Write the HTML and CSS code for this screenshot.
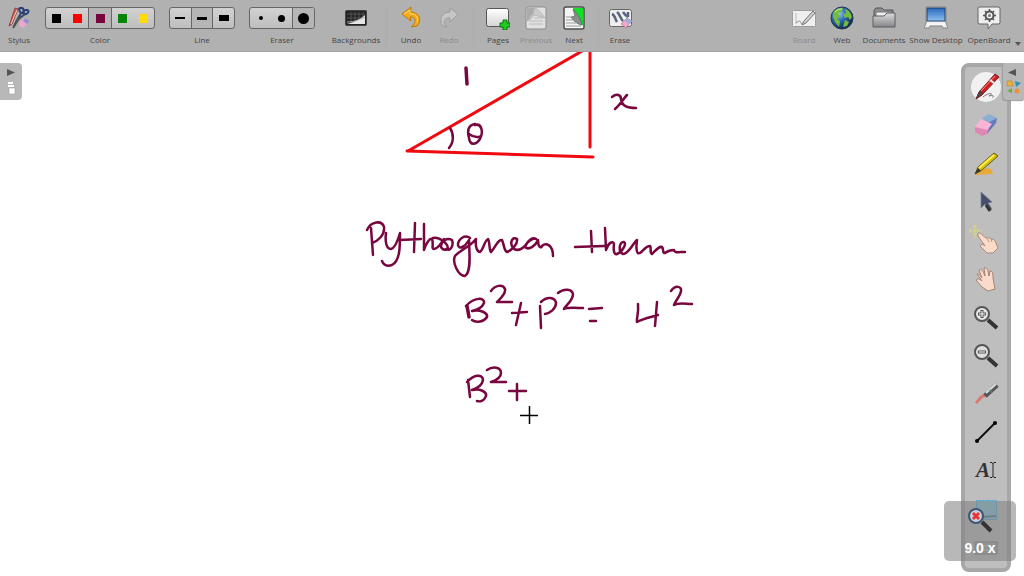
FILE: index.html
```html
<!DOCTYPE html>
<html lang="en">
<head>
<meta charset="utf-8">
<meta name="viewport" content="width=device-width, initial-scale=1">
<title>OpenBoard</title>
<link rel="stylesheet" href="styles.css">
</head>
<body>
<svg class="defs" aria-hidden="true">
  <defs>
    <linearGradient id="steel" x1="0" y1="0" x2="0" y2="1"><stop offset="0" stop-color="#ddd"/><stop offset="1" stop-color="#85858a"/></linearGradient>
    <linearGradient id="paper" x1="0" y1="0" x2="0" y2="1"><stop offset="0" stop-color="#fff"/><stop offset="1" stop-color="#d5d5d5"/></linearGradient>
    <linearGradient id="sky" x1="0" y1="0" x2="0" y2="1"><stop offset="0" stop-color="#2868bd"/><stop offset="1" stop-color="#8fc0ef"/></linearGradient>
    <radialGradient id="sea" cx=".35" cy=".3" r=".75"><stop offset="0" stop-color="#9bc8f4"/><stop offset=".45" stop-color="#2d68b4"/><stop offset="1" stop-color="#12224e"/></radialGradient>
  </defs>
</svg>
<header class="toolbar">
  <button class="tool" type="button">
    <svg class="icon" viewBox="0 0 24 24"><path d="M13 2c-2 1 0 5 2 5s2-5 0-5zM20 4c2 0 2 3-1 4s-3-4 0-4z" fill="none" stroke="#263e78" stroke-width="2"/><path d="M14 7L7 20M18 8L9 15" stroke="#384868" stroke-width="2"/><path d="M8 2l3 1-6 15-3 2z" fill="#d85745" stroke="#8b4945"/><path d="M10 4L4 18" stroke="#f7c7bb"/><path d="M13 11L6 22" stroke="#555" stroke-width="2"/><path d="M13 15l5-3 5 3-7 7-4-2z" fill="#eda7d0"/><path d="M18 12l5 3-3 3-4-3z" fill="#8993c7"/></svg>
    <span class="label">Stylus</span>
  </button>
  <div class="group color-group" role="group" aria-labelledby="color-label">
    <div class="segments">
      <button type="button" class="segment" aria-label="Black"><i class="swatch black"></i></button>
      <button type="button" class="segment" aria-label="Red"><i class="swatch red"></i></button>
      <button type="button" class="segment selected" aria-label="Purple" aria-pressed="true"><i class="swatch purple"></i></button>
      <button type="button" class="segment" aria-label="Green"><i class="swatch green"></i></button>
      <button type="button" class="segment" aria-label="Yellow"><i class="swatch yellow"></i></button>
    </div>
    <span class="label" id="color-label">Color</span>
  </div>
  <div class="group" role="group" aria-labelledby="line-label">
    <div class="segments">
      <button type="button" class="segment" aria-label="Fine line"><i class="stroke fine"></i></button>
      <button type="button" class="segment selected" aria-label="Medium line" aria-pressed="true"><i class="stroke medium"></i></button>
      <button type="button" class="segment" aria-label="Strong line"><i class="stroke strong"></i></button>
    </div>
    <span class="label" id="line-label">Line</span>
  </div>
  <div class="group" role="group" aria-labelledby="eraser-label">
    <div class="segments">
      <button type="button" class="segment" aria-label="Small eraser"><i class="dot small"></i></button>
      <button type="button" class="segment" aria-label="Medium eraser"><i class="dot mid"></i></button>
      <button type="button" class="segment last-selected" aria-label="Large eraser" aria-pressed="true"><i class="dot large"></i></button>
    </div>
    <span class="label" id="eraser-label">Eraser</span>
  </div>
  <div class="section backgrounds">
    <button class="tool" type="button">
      <svg class="icon" viewBox="0 0 24 24"><rect x="1.500" y="4.500" width="21" height="15" rx="1" fill="#242424" stroke="#444"/><path d="M3 8h18M3 12h18M7 6v12M11 6v12M15 6v12M19 6v12" stroke="#626262" stroke-width=".7"/><path d="M3 18c8-2 14-5 18-9v9z" fill="#e5e5e5"/><path d="M3 16c8 0 13-3 18-5" stroke="#aaa" fill="none"/></svg>
      <span class="label">Backgrounds</span>
    </button>
  </div>
  <div class="section">
    <button class="tool" type="button">
      <svg class="icon" viewBox="0 0 24 24"><path d="M3 8l9-7-.5 5C19 6 24 13 18 20l-6 1c6-4 5-11-1-10l1 4z" fill="#f6aa19" stroke="#bc780c"/><path d="M5 8l6-4v4c5-1 9 3 7 8" fill="none" stroke="#ffdc76"/></svg>
      <span class="label">Undo</span>
    </button>
    <button class="tool" type="button" disabled>
      <svg class="icon" viewBox="0 0 24 24"><path d="M21 8l-8-6v4C5 6 1 13 6 20l4 1c-5-4-3-10 3-9v4z" fill="#ccc" stroke="#999"/></svg>
      <span class="label">Redo</span>
    </button>
  </div>
  <div class="section">
    <button class="tool" type="button">
      <svg class="icon" viewBox="0 0 24 24"><rect x=".5" y="2.500" width="22" height="18" rx="2" fill="url(#paper)" stroke="#555"/><path d="M17 14h4v3h3v4h-3v3h-4v-3h-3v-4h3z" fill="#20ca25" stroke="#08780b"/></svg>
      <span class="label">Pages</span>
    </button>
    <button class="tool" type="button" disabled>
      <svg class="icon" viewBox="0 0 24 24"><rect x="2" y="1" width="20" height="22" rx="2" fill="#eee" stroke="#858585"/><path d="M3 2h7L9 8 3 15z" fill="#aaa"/><path d="M10 2c5 1 7 5 11 10L10 9l-7 6c6-2 7-7 7-13z" fill="#d2d2d2" stroke="#999" stroke-width=".5"/><path d="M5 15h14M5 18h14M10 12h9" stroke="#bbb"/></svg>
      <span class="label">Previous</span>
    </button>
    <button class="tool" type="button">
      <svg class="icon" viewBox="0 0 24 24"><rect x="2" y="1" width="20" height="22" rx="2" fill="#f4f4f4" stroke="#4f4f4f" stroke-width="1.500"/><path d="M11 2h10v18c-4-4-7-10-10-18z" fill="#15de27"/><path d="M11 3c2 2 8 9 9 16-6-1-9-5-11-8l4-1z" fill="#88918d" stroke="#4d5652" stroke-width=".6"/><path d="M4 11h5M4 14h7M4 17h10M4 20h15" stroke="#9a9a9a"/></svg>
      <span class="label">Next</span>
    </button>
  </div>
  <div class="section erase">
    <button class="tool" type="button">
      <svg class="icon" viewBox="0 0 24 24"><rect x="1.500" y="3.500" width="22" height="17" rx="2" fill="#eee" stroke="#666"/><path d="M4 8c3 1 3 5 5 8M9 6c3 2 3 6 6 9M15 6c2 3 3 4 5 5M20 6v5" fill="none" stroke="#58677e" stroke-width="2.500"/><path d="M13 18l6-6 5 3-6 7z" fill="#f3a5ca" stroke="#a26788" stroke-width=".6"/><path d="M19 12l5 3-3 3-4-3z" fill="#9aaee0"/></svg>
      <span class="label">Erase</span>
    </button>
  </div>
  <nav class="modes" aria-label="Modes">
    <button class="tool" type="button" disabled>
      <svg class="icon" viewBox="0 0 24 24"><rect x=".5" y="4.500" width="23" height="16" rx="1" fill="#fff" stroke="#999"/><path d="M4 7v11" stroke="#bbb"/><path d="M4 17c3-3 5-2 5 0s3 0 4-1" fill="none" stroke="#888"/><path d="M21 5l2 2-9 10-4 2 2-4z" fill="#d8d8d8" stroke="#666"/></svg>
      <span class="label">Board</span>
    </button>
    <button class="tool" type="button">
      <svg class="icon" viewBox="0 0 24 24"><circle cx="12" cy="12" r="11" fill="url(#sea)" stroke="#233352"/><path d="M3 7c2-4 6-5 10-5l-2 4-3 1 2 3-3 3 3 2-1 6-4-5-2-5zM15 3c4 1 6 4 7 8l-2 3-2-3-3 1-2-3 3-2zM15 14l4 2-2 4-4 1z" fill="#74bd3b"/><path d="M5 6c2-2 4-3 7-3" stroke="#d1ef9c" fill="none"/></svg>
      <span class="label">Web</span>
    </button>
    <button class="tool documents" type="button">
      <svg class="icon" viewBox="0 0 24 24"><path d="M2 20V4l2-2h6l2 2h9v16z" fill="#8d8d91" stroke="#555"/><path d="M4 19V6h16v13" fill="#eee" stroke="#777"/><path d="M1 21V10h11l3-3h8v14z" fill="url(#steel)" stroke="#5d5d61"/></svg>
      <span class="label">Documents</span>
    </button>
    <button class="tool desktop" type="button">
      <svg class="icon" viewBox="0 0 24 24"><path d="M2 1h20v16l2 5h-5l-1-2H6l-1 2H0l2-5z" fill="#ededed" stroke="#888"/><rect x="3" y="2" width="18" height="13" fill="url(#sky)" stroke="#213e69"/><path d="M3 18h18" stroke="#fff"/></svg>
      <span class="label">Show Desktop</span>
    </button>
    <button class="tool openboard" type="button">
      <svg class="icon" viewBox="0 0 24 24"><path d="M2 1h20l1 1v15l-1 1h-7l-4 5v-5H2l-1-1V2z" fill="#eee" stroke="#666"/><circle cx="12.500" cy="9.500" r="4" fill="none" stroke="#555" stroke-width="2"/><path d="M12.500 3v3m0 7v3M6 9.500h3m7 0h3M8 5l2 2m5 5l2 2m0-9l-2 2m-5 5l-2 2" stroke="#555" stroke-width="1.600"/><circle cx="12.500" cy="9.500" r="1.500" fill="#777"/></svg>
      <span class="label">OpenBoard</span>
      <i class="caret"></i>
    </button>
  </nav>
</header>

<main class="board">
  <svg class="ink" viewBox="0 52 1024 524" role="img" aria-label="Right triangle with hypotenuse 1, side x and angle theta; Pythagorean theorem: B squared plus P squared equals H squared; B squared plus">
    <g class="triangle">
      <path d="M408 151L590 46.500M407 151L593 157M590 46V147"/>
    </g>
    <g class="handwriting">
      <path class="bold" d="M466 68L467 84"/>
      <path d="M450 128C454 134 454 142 449 148M475 124C468 125 467 131 469 138C470 146 476 145 480 139C484 131 481 123 475 125M469 134C473 137 477 138 481 136"/>
      <path d="M612 97C617 93 621 95 621 99C622 106 627 108 636 108M627 95C624 98 620 105 615 109"/>
      <path d="M371 228L373 255M367 230C371 221 382 220 384 227C385 235 378 241 372 243M386 233C385 241 386 249 391 249C395 248 398 240 400 233C400 247 400 261 392 265C386 267 383 264 382 261M400 240L421 239M415 223L414 252M424 224L424 250C426 243 430 238 432 239C434 244 431 249 434 249C438 249 442 242 444 239M433 238C439 237 443 240 447 245C450 251 443 251 441 247C441 241 447 237 452 240C454 246 450 252 446 249"/>
      <path d="M470 238C465 234 458 239 458 245C459 250 465 247 469 240C469 250 472 272 465 276C458 276 452 262 455 256C460 250 470 247 476 239C475 246 477 252 480 252C484 249 484 241 488 239C490 242 489 250 491 252C495 248 498 239 502 240C504 244 504 251 507 252C512 250 518 244 517 239C513 236 509 242 513 248C517 252 522 249 526 245C529 239 533 237 536 239C534 237 525 243 525 247C529 251 536 245 538 240C538 247 541 249 542 246C546 242 553 245 553 256"/>
      <path d="M575 247L604 246M591 231L592 252M605 228L606 250C608 243 613 240 614 244C613 250 614 255 617 254C622 252 627 244 624 242C619 241 618 252 623 254C629 254 633 243 637 240C636 247 636 255 640 253C644 250 646 246 650 246C652 248 649 252 652 254C656 250 659 246 662 247C664 249 662 253 665 253C669 250 671 250 674 250C674 253 678 252 685 252"/>
      <path class="bold" d="M467 306L469 317"/>
      <path d="M466 306C474 297 485 297 484 303C482 308 477 310 472 311C480 309 488 313 487 317C484 322 476 323 472 320M491 291C495 285 503 284 505 289C506 294 500 299 497 302L512 302M512 313L527 312M521 303L516 325M540 306L541 328M541 302C547 296 555 297 556 303C556 309 550 313 545 314M558 293C564 288 572 289 573 294C573 301 565 306 564 309C568 307 577 308 583 308M589 309L602 308M590 321L596 321"/>
      <path d="M638 304C639 313 636 320 637 322C644 318 652 317 658 315M657 302L655 326M671 291C675 285 682 286 681 291C680 297 675 301 674 305C679 302 686 304 692 304"/>
      <path d="M468 380L470 397M467 382C474 374 483 374 483 380C482 386 475 389 472 390C480 388 487 392 486 396C484 401 480 402 477 401M487 370C493 366 501 367 501 373C501 378 494 381 491 382L506 382M509 391L526 391M517 384L517 400"/>
    </g>
    <path class="cursor" d="M520 415.500H538M529.500 406V424"/>
  </svg>

  <button class="drawer left" type="button" aria-label="Open page navigator">
    <svg viewBox="0 0 22 37"><path d="M7 6l8 3.500L7 13z" fill="#555"/><path d="M8 19h5v2H8zM8 22h6v2H8z" fill="#fff"/><path d="M9 25h6v6H9z" fill="#fff" stroke="#999" stroke-width=".5"/></svg>
  </button>

  <aside class="palette" aria-label="Drawing tools">
    <button type="button" aria-label="Pen" aria-pressed="true"><svg viewBox="0 0 32 32"><circle cx="16" cy="16" r="15" fill="#f1f1f1"/><path d="M13 26c6-5 12-4 6-1 6-2 5 2 3 1" fill="none" stroke="#777"/><path d="M25 3l4 3-17 18-6 4 3-7z" fill="#d51e24" stroke="#721e20"/><path d="M25 5L10 21" stroke="#ff8f85"/><path d="M10 19l3 3-7 6z" fill="#444"/><path d="M20 9l4 3" stroke="#eee" stroke-width="2"/></svg></button>
    <button type="button" aria-label="Eraser"><svg viewBox="0 0 32 32"><path d="M12 9l7-4 8 4-7 8z" fill="#8baed3"/><path d="M18 14l9-5-1 5-9 11z" fill="#6579bd"/><path d="M5 18l13-1 3-3-4 11-5 2-7-4z" fill="#df86b4"/><path d="M11 10l11 5-5 6-12-3z" fill="#f9b5d3"/></svg></button>
    <button type="button" aria-label="Highlighter"><svg viewBox="0 0 32 32"><path d="M5 27c7-6 10-8 16-6l2 5z" fill="#e8ab39"/><path d="M24 5l4 3-16 14-7 4 3-7z" fill="#d8bd13" stroke="#685c16"/><path d="M24 7L9 20" stroke="#fff149" stroke-width="2"/><path d="M8 20l3 3-6 3z" fill="#333"/></svg></button>
    <button type="button" aria-label="Select"><svg viewBox="0 0 32 32"><path d="M11 6v16l4-4 4 7 3-2-4-6 4-1z" fill="#454f6c" stroke="#777d91" stroke-width=".7"/><path d="M16 19l4 6" stroke="#333" stroke-width="3"/></svg></button>
    <button type="button" aria-label="Interact"><svg viewBox="0 0 32 32"><path d="M5 1v13M-1 7h13" stroke="#d6d284" stroke-width="3" stroke-dasharray="3 1"/><path d="M8 9c2-1 4 2 8 5 2-1 4 0 5 1 3 0 4 1 5 4l2 5-5 5h-6l-7-7c0-2 3-2 5 0L8 12z" fill="#fadbcb" stroke="#a98977"/><path d="M17 14l2 4M21 15l1 3" stroke="#bd9682"/></svg></button>
    <button type="button" aria-label="Scroll"><svg viewBox="0 0 32 32"><path d="M7 11c2-1 3 2 5 4L9 7c2-2 4 1 6 6L14 5c3-1 4 2 5 8l1-5c3 0 3 3 3 7l2 11-7 2-6-4-6-7c1-2 4-1 6 1z" fill="#fadbcb" stroke="#a58270"/></svg></button>
    <button type="button" aria-label="Zoom in"><svg viewBox="0 0 32 32"><path d="M18 19l9 8" stroke="#333" stroke-width="4"/><circle cx="12" cy="13" r="7" fill="#e5e5e5" stroke="#555" stroke-width="2"/><path d="M8 13h8M12 9v8" stroke="#555" stroke-width="3"/><path d="M9 13h6M12 10v6" stroke="#fff"/></svg></button>
    <button type="button" aria-label="Zoom out"><svg viewBox="0 0 32 32"><path d="M18 19l9 8" stroke="#333" stroke-width="4"/><circle cx="12" cy="13" r="7" fill="#dedede" stroke="#555" stroke-width="2"/><path d="M8 13h8" stroke="#555" stroke-width="3"/><path d="M9 13h6" stroke="#fff"/></svg></button>
    <button type="button" aria-label="Laser pointer"><svg viewBox="0 0 32 32"><path d="M15 17c-5 2-6 5-9 8" stroke="#dc7773" stroke-width="3" fill="none"/><path d="M15 18L27 7" stroke="#555" stroke-width="5"/><path d="M16 15L26 6" stroke="#ddd" stroke-width="2"/><path d="M20 12l2 3" stroke="#4b855c" stroke-width="2"/></svg></button>
    <button type="button" aria-label="Line"><svg viewBox="0 0 32 32"><path d="M7 25L25 7" stroke="#111" stroke-width="2"/><circle cx="7" cy="25" r="2"/><circle cx="25" cy="7" r="2"/></svg></button>
    <button type="button" class="text-tool" aria-label="Write text"><b>A</b><svg viewBox="0 0 6 20"><path d="M0 2.500h2l1 1 1-1h2M3 3v14M0 17.500h2l1-1 1 1h2" fill="none" stroke="#222"/></svg></button>
    <button type="button" aria-label="Capture"><svg viewBox="0 0 32 32"><rect x="6.500" y="7.500" width="20" height="19" fill="#8cc5d6" stroke="#3aa5df" stroke-dasharray="2 1"/><path d="M12 24l14-1" stroke="#607d90" stroke-width="2"/></svg></button>
    <button type="button" aria-label="Virtual keyboard"><svg viewBox="0 0 32 32"><rect x="5" y="11" width="22" height="12" fill="#aaa" stroke="#888"/><path d="M7 15h18M7 19h18" stroke="#ddd" stroke-dasharray="2 1"/></svg></button>
  </aside>

  <button class="drawer right" type="button" aria-label="Open library">
    <svg viewBox="0 0 21 37"><path d="M13 6L5 9.500 13 13z" fill="#555"/><path d="M4 18h5l1 5H4z" fill="#ecb336" stroke="#a77b20" stroke-width=".5"/><path d="M12 18l6 2-5 4z" fill="#2e91b5"/><path d="M9 25v5l-5-2z" fill="#6eaa3f"/><circle cx="14" cy="28" r="2.500" fill="#ed933d"/></svg>
  </button>

  <div class="zoom-level" role="status">
    <svg viewBox="0 0 28 28"><path d="M16 16l9 9" stroke="#333" stroke-width="4"/><circle cx="10" cy="10" r="7" fill="#c5d1dc" stroke="#405575" stroke-width="2"/><path d="M7 7l6 6M13 7l-6 6" stroke="#ea3333" stroke-width="3"/></svg>
    <span>9.0 x</span>
  </div>
</main>
</body>
</html>
```
FILE: styles.css
```css
* { box-sizing: border-box; }

body {
  margin: 0;
  height: 100vh;
  display: flex;
  flex-direction: column;
  overflow: hidden;
  background: #fff;
  font-family: "Open Sans", "Noto Sans", sans-serif;
  color: #444;
}

button {
  margin: 0;
  padding: 0;
  border: 0;
  background: none;
  color: inherit;
  font: inherit;
}

.defs { position: absolute; width: 0; height: 0; }

.toolbar {
  display: flex;
  flex: none;
  padding: 6px 11px 5px 0;
  background: #b1b1b1;
  border-bottom: 1px solid #a0a0a0;
}

.tool,
.group {
  display: flex;
  flex-direction: column;
  align-items: center;
  flex: none;
}

.tool { width: 38px; position: relative; }
.tool:disabled { color: #8b8b8b; }
.icon { display: block; width: 24px; height: 24px; }
.tool:disabled .icon { opacity: 0.8; }

.label {
  margin-top: 4px;
  font-size: 8px;
  line-height: 12px;
  white-space: nowrap;
}

.group { width: 66px; margin-right: 14px; }
.color-group { width: 110px; margin-left: 7px; }

.segments {
  display: flex;
  width: 100%;
  height: 22px;
  margin: 1px 0;
  overflow: hidden;
  border: 1px solid #666;
  border-radius: 3px;
  background: linear-gradient(#d2d2d2, #bebebe);
}

.segment {
  display: flex;
  flex: 1;
  align-items: center;
  justify-content: center;
}

.selected {
  background: #b5b5b5;
  border: solid #666;
  border-width: 0 1px;
}

.last-selected { background: #b5b5b5; border-left: 1px solid #666; }

.swatch { width: 9px; height: 9px; }
.black { background: #000; }
.red { background: #f00; }
.purple { background: #78053d; }
.green { background: #078507; }
.yellow { background: #ffdb00; }

.stroke { width: 10px; background: #000; }
.fine { height: 2px; }
.medium { height: 3px; }
.strong { height: 6px; }

.dot { border-radius: 50%; background: #000; }
.small { width: 4px; height: 4px; }
.mid { width: 7px; height: 7px; }
.large { width: 11px; height: 11px; }

.section {
  display: flex;
  padding: 0 5px;
  border-left: 1px solid #acacac;
}

.backgrounds { padding: 0 3px 0 0; border-left: 0; }
.backgrounds .tool { width: 54px; }
.erase { padding-left: 2px; }

.modes { display: flex; margin-left: auto; }
.documents { width: 46px; }
.desktop { width: 58px; }
.openboard { width: 48px; }

.caret {
  position: absolute;
  right: -8px;
  bottom: 0;
  border: solid transparent;
  border-width: 4px 3px 0;
  border-top-color: #555;
}

.board { position: relative; flex: 1; min-height: 0; }
.ink { display: block; width: 100%; height: 100%; }
.triangle { fill: none; stroke: #f00a0f; stroke-width: 3; stroke-linecap: round; }
.handwriting { fill: none; stroke: #78063f; stroke-width: 2.5; stroke-linecap: round; stroke-linejoin: round; }
.bold { stroke-width: 3.5; }
.cursor { fill: none; stroke: #000; stroke-width: 1.5; }

.drawer {
  position: absolute;
  top: 11px;
  height: 37px;
  background: #b8b8b8;
}

.drawer svg { display: block; width: 100%; height: 100%; }
.left { left: 0; width: 22px; border-radius: 0 4px 4px 0; }
.right { right: 0; width: 21px; border-radius: 4px 0 0 4px; box-shadow: -1px 1px 1px #999; }

.palette {
  position: absolute;
  top: 11px;
  right: 13px;
  bottom: 4px;
  display: flex;
  flex-direction: column;
  width: 50px;
  padding: 1px 0 2px;
  border: 4px solid #a7a7a7;
  border-radius: 8px;
  background: #bebebe;
}

.palette button {
  display: flex;
  flex: 1;
  align-items: center;
  justify-content: center;
  min-height: 0;
}

.palette svg { width: 32px; height: 32px; overflow: visible; }
.text-tool b { font: italic bold 21px/24px "Liberation Serif", serif; color: #333; }
.palette .text-tool svg { width: 6px; height: 20px; }

.zoom-level {
  position: absolute;
  right: 8px;
  bottom: 15px;
  display: flex;
  flex-direction: column;
  align-items: center;
  width: 72px;
  padding: 5px 0 3px;
  border-radius: 5px;
  background: rgb(125 125 125 / 55%);
  color: #fff;
  font: bold 14px/20px "Liberation Sans", sans-serif;
}

.zoom-level svg { width: 28px; height: 28px; }
.zoom-level span { margin-top: 4px; }
```
